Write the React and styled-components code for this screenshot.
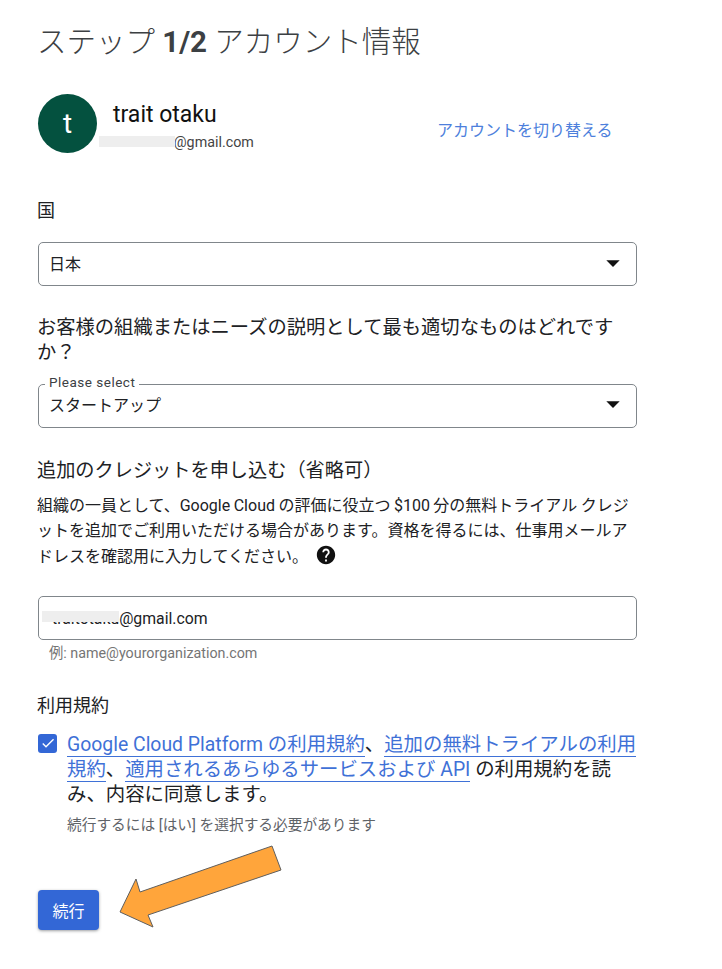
import React from "react";
import styled, { createGlobalStyle } from "styled-components";
import { MdHelp, MdArrowDropDown, MdCheck } from "react-icons/md";

const GlobalStyle = createGlobalStyle`
  html, body {
    margin: 0;
    padding: 0;
    background: #fff;
    font-family: Roboto, "Noto Sans CJK JP", sans-serif;
    color: #202124;
  }
`;

const Page = styled.div`
  position: relative;
  width: 722px;
  height: 969px;
  padding: 22px 0 0 37px;
  box-sizing: border-box;
  overflow: hidden;
`;

const Form = styled.div`
  width: 601px;
`;

const Title = styled.h1`
  margin: 0;
  font-size: 29.5px;
  line-height: 40px;
  font-weight: 300;
  color: #3c4043;
  b {
    font-weight: 700;
  }
`;

const AccountRow = styled.div`
  display: flex;
  margin-top: 32px;
  height: 60px;
`;

const Avatar = styled.div`
  width: 59px;
  height: 59px;
  margin-left: 1px;
  border-radius: 50%;
  background: #04513f;
  color: #fff;
  font-size: 28px;
  display: flex;
  align-items: center;
  justify-content: center;
`;

const AccountInfo = styled.div`
  margin-left: 16px;
  padding-top: 8px;
  width: 324px;
`;

const Name = styled.div`
  font-size: 23px;
  line-height: 26px;
  color: #111;
`;

const Email = styled.div`
  position: relative;
  font-size: 14.3px;
  line-height: 20px;
  margin-top: 4px;
  color: #444;
`;

const Mask = styled.span`
  position: absolute;
  left: ${(p) => p.$left}px;
  top: ${(p) => p.$top}px;
  width: ${(p) => p.$width}px;
  height: ${(p) => p.$height}px;
  background: #eee;
`;

const SwitchLink = styled.a`
  align-self: flex-end;
  margin-bottom: 13px;
  font-size: 16px;
  line-height: 20px;
  color: #4d7fdc;
  white-space: nowrap;
`;

const Label = styled.div`
  margin-top: ${(p) => p.$top}px;
  font-size: ${(p) => p.$size || 18}px;
  line-height: 25px;
  color: #202124;
`;

const FieldBox = styled.div`
  position: relative;
  box-sizing: border-box;
  height: 44px;
  margin: ${(p) => p.$top}px 0 0 1px;
  width: 599px;
  padding: ${(p) => p.$pad || "0 7px 3px 10px"};
  border: 1px solid #80868b;
  border-radius: 5px;
  display: flex;
  align-items: center;
  justify-content: space-between;
  font-size: ${(p) => p.$size || 16}px;
  color: #202124;
  svg {
    color: #111;
  }
`;

const Floating = styled.span`
  position: absolute;
  left: 6px;
  top: -11px;
  padding: 0 4px;
  background: #fff;
  font-size: 13.5px;
  line-height: 16px;
  letter-spacing: 0.5px;
  color: #3c4043;
`;

const Body = styled.p`
  margin: 10px 0 0;
  font-size: 16px;
  line-height: 25.3px;
  word-spacing: -0.5px;
  color: #202124;
  svg {
    vertical-align: -4px;
    margin-left: 7px;
    color: #111;
  }
`;

const Helper = styled.div`
  margin: 4px 0 0 12px;
  font-size: 14.3px;
  line-height: 18px;
  color: #757575;
`;

const Terms = styled.div`
  display: flex;
  margin-top: 15px;
`;

const CheckBox = styled.div`
  flex: none;
  width: 19px;
  height: 19px;
  margin: 1px 10px 0 1px;
  border-radius: 3px;
  background: #3367d6;
  color: #fff;
  display: flex;
  align-items: center;
  justify-content: center;
`;

const TermsText = styled.div`
  font-size: 19.4px;
  line-height: 25px;
  margin-top: -1px;
  color: #202124;
  white-space: nowrap;
  a {
    color: #3f71d7;
    border-bottom: 1px solid #3f71d7;
  }
`;

const Note = styled.div`
  margin-top: 8px;
  font-size: 14.7px;
  line-height: 20px;
  color: #5f6368;
`;

const Button = styled.button`
  display: block;
  margin: 55px 0 0 1px;
  width: 61px;
  height: 40px;
  border: 0;
  border-radius: 4px;
  background: #3367d6;
  color: #fff;
  font-family: inherit;
  font-size: 16px;
  box-shadow: 0 1px 3px rgba(60, 64, 67, 0.5);
`;

const ArrowMark = styled.svg`
  position: absolute;
  left: 0;
  top: 0;
  pointer-events: none;
`;

export default function App() {
  return (
    <Page>
      <GlobalStyle />
      <Form>
        <Title>
          ステップ <b>1/2</b> アカウント情報
        </Title>

        <AccountRow>
          <Avatar>t</Avatar>
          <AccountInfo>
            <Name>trait otaku</Name>
            <Email>
              traitotaku@gmail.com
              <Mask $left={-14} $top={4} $width={76} $height={10.5} />
            </Email>
          </AccountInfo>
          <SwitchLink>アカウントを切り替える</SwitchLink>
        </AccountRow>

        <Label $top={44}>国</Label>
        <FieldBox $top={19}>
          <span>日本</span>
          <MdArrowDropDown size={32} />
        </FieldBox>

        <Label $top={29} $size={19.3}>
          お客様の組織またはニーズの説明として最も適切なものはどれですか？
        </Label>
        <FieldBox $top={19} $pad="0 7px 5px 10px">
          <Floating>Please select</Floating>
          <span>スタートアップ</span>
          <MdArrowDropDown size={32} />
        </FieldBox>

        <Label $top={30} $size={19.2}>
          追加のクレジットを申し込む（省略可）
        </Label>
        <Body>
          組織の一員として、Google Cloud の評価に役立つ $100 分の無料トライアル クレジ
          <br />
          ットを追加でご利用いただける場合があります。資格を得るには、仕事用メールア
          <br />
          ドレスを確認用に入力してください。
          <MdHelp size={22} />
        </Body>

        <FieldBox $top={27} $size={15.8} $pad="1px 4px 0 13px">
          <span>
            traitotaku@gmail.com
            <Mask $left={3} $top={14} $width={77} $height={11} />
          </span>
        </FieldBox>
        <Helper>例: name@yourorganization.com</Helper>

        <Label $top={31}>利用規約</Label>
        <Terms>
          <CheckBox>
            <MdCheck size={16} />
          </CheckBox>
          <div>
            <TermsText>
              <a>Google Cloud Platform の利用規約</a>、<a>追加の無料トライアルの利用</a>
              <br />
              <a>規約</a>、<a>適用されるあらゆるサービスおよび API</a> の利用規約を読
              <br />
              み、内容に同意します。
            </TermsText>
            <Note>続行するには [はい] を選択する必要があります</Note>
          </div>
        </Terms>

        <Button>続行</Button>
      </Form>

      <ArrowMark width="722" height="969" viewBox="0 0 722 969">
        <polygon
          points="120,912 136,879 140,892 272,846 281,870 148,915 153,927"
          fill="#ffa53b"
          stroke="#5f5f5f"
          strokeWidth="1"
        />
      </ArrowMark>
    </Page>
  );
}
